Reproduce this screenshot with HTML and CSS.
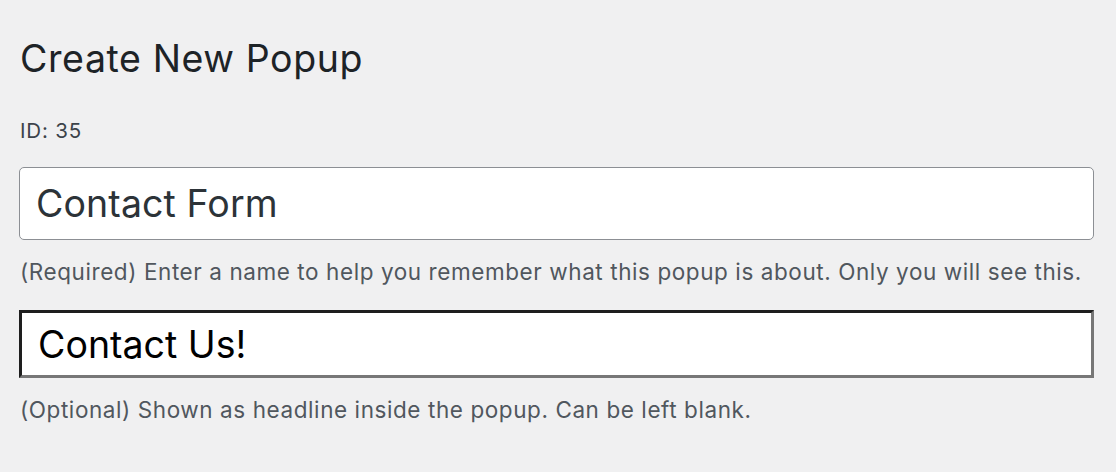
FILE: index.html
```html
<!DOCTYPE html>
<html>
<head>
<meta charset="utf-8">
<link rel="stylesheet" href="styles.css">
</head>
<body>
<div class="wrap">
  <h1 class="title">Create New Popup</h1>
  <p class="id">ID: 35</p>
  <div class="field">
    <input class="input name" type="text" value="Contact Form">
    <p class="desc">(Required) Enter a name to help you remember what this popup is about. Only you will see this.</p>
  </div>
  <div class="field">
    <input class="input headline" type="text" value="Contact Us!">
    <p class="desc">(Optional) Shown as headline inside the popup. Can be left blank.</p>
  </div>
</div>
</body>
</html>
```

FILE: styles.css
```css
html, body {
  margin: 0;
  padding: 0;
  background: #f0f0f1;
}
body {
  font-family: Inter, "Liberation Sans", sans-serif;
  color: #1d2327;
}
.wrap {
  padding: 35px 22px 0 19px;
  width: 1075px;
}
.title {
  margin: 0 0 0 1px;
  font-size: 37.5px;
  font-weight: 400;
  line-height: 48px;
  letter-spacing: 0.6px;
  color: #1d2327;
}
.id {
  margin: 35px 0 0 1px;
  font-size: 20.5px;
  line-height: 26px;
  letter-spacing: 0.8px;
  color: #3c434a;
}
.field {
  display: flex;
  flex-direction: column;
}
.input {
  box-sizing: border-box;
  width: 1075px;
  margin: 0;
  font-family: Inter, "Liberation Sans", sans-serif;
  background: #fff;
  outline: none;
}
.name {
  margin-top: 23px;
  height: 73px;
  padding: 0 16px;
  border: 1px solid #8c8f94;
  border-radius: 5px;
  font-size: 37.5px;
  letter-spacing: 0.1px;
  color: #2c3338;
}
.headline {
  margin-top: 23px;
  height: 68px;
  padding: 0 16px;
  border-width: 3px;
  border-style: solid;
  border-color: #1e1e1e #777 #777 #1e1e1e;
  border-radius: 0;
  font-size: 37.5px;
  color: #000;
}
.desc {
  margin: 17px 0 0 1px;
  font-size: 22.5px;
  line-height: 30px;
  letter-spacing: 0.58px;
  color: #50575e;
}
```
